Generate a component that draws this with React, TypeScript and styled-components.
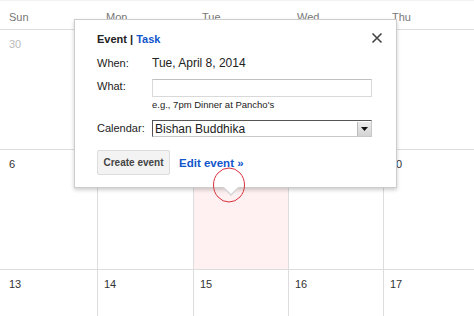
import React from 'react';
import styled, { createGlobalStyle } from 'styled-components';

const GlobalStyle = createGlobalStyle`
  html, body { margin: 0; padding: 0; background: #fff; }
  body { font-family: "Liberation Sans", Arial, sans-serif; }
`;

const Page = styled.div`
  position: relative;
  width: 474px;
  height: 316px;
  overflow: hidden;
  background: #fff;
`;

const Grid = styled.div`
  display: grid;
  grid-template-columns: 97px 96px 95px 95px 91px;
  grid-template-rows: 29px 120px 120px 120px;
  width: 474px;
  border-top: 1px solid #f2f2f2;
`;

const HeadCell = styled.div`
  border-bottom: 1px solid #dddddd;
  padding: 10px 0 0 9px;
  font-size: 11px;
  color: #777;
  box-sizing: border-box;
`;

const DayCell = styled.div<{ $today?: boolean; $first?: boolean }>`
  border-bottom: 1px solid #dddddd;
  border-left: ${p => (p.$first ? 'none' : '1px solid #dddddd')};
  background: ${p => (p.$today ? '#fff1f1' : '#fff')};
  box-sizing: border-box;
  padding: 4px 0 0 ${p => (p.$first ? '9px' : '6px')};
`;

const DayNum = styled.span<{ $muted?: boolean }>`
  font-size: 11px;
  color: ${p => (p.$muted ? '#bbbbbb' : '#333')};
`;

const Popup = styled.div`
  position: absolute;
  left: 74px;
  top: 19px;
  width: 323px;
  height: 169px;
  box-sizing: border-box;
  background: #fff;
  border: 1px solid #cccccc;
  box-shadow: 0 2px 4px rgba(0, 0, 0, 0.2);
  padding: 12px 0 0 22px;

  &::before {
    content: '';
    position: absolute;
    left: 147px;
    bottom: -9px;
    border-left: 9px solid transparent;
    border-right: 9px solid transparent;
    border-top: 9px solid #d4d4d4;
  }
  &::after {
    content: '';
    position: absolute;
    left: 148px;
    bottom: -7px;
    border-left: 8px solid transparent;
    border-right: 8px solid transparent;
    border-top: 8px solid #fff;
  }
`;

const Close = styled.button`
  position: absolute;
  right: 13px;
  top: 12px;
  width: 12px;
  height: 12px;
  padding: 0;
  border: none;
  background: none;
  display: flex;
`;

const Title = styled.div`
  font-size: 11px;
  font-weight: bold;
  color: #222;
  line-height: 14px;
`;

const TaskLink = styled.span`
  color: #1155cc;
`;

const Form = styled.div`
  display: grid;
  grid-template-columns: 55px 220px;
  margin-top: 10px;
  font-size: 11px;
  color: #222;
`;

const Label = styled.div<{ $top?: number }>`
  line-height: 14px;
  padding-top: ${p => p.$top ?? 0}px;
`;

const Value = styled.div`
  font-size: 12px;
  line-height: 14px;
`;

const Spacer = styled.div<{ $h: number }>`
  grid-column: 1 / -1;
  height: ${p => p.$h}px;
`;

const TextInput = styled.div`
  height: 18px;
  box-sizing: border-box;
  border: 1px solid #d9d9d9;
  border-top-color: #c0c0c0;
`;

const Hint = styled.div`
  font-size: 9.5px;
  line-height: 12px;
  margin-top: 2px;
  color: #222;
`;

const Select = styled.div`
  height: 17px;
  box-sizing: border-box;
  border: 1px solid #c8c8c8;
  border-top-color: #555;
  border-left-color: #555;
  display: flex;
  align-items: center;
  font-size: 12px;
  padding-left: 2px;
  justify-content: space-between;
`;

const SelectArrow = styled.div`
  width: 13px;
  height: 14px;
  background: linear-gradient(#ececec, #d4d4d4);
  border-left: 1px solid #bbb;
  display: flex;
  align-items: center;
  justify-content: center;
`;

const Actions = styled.div`
  display: flex;
  align-items: center;
  gap: 9px;
  margin-top: 13px;
`;

const Button = styled.button`
  height: 25px;
  width: 73px;
  padding: 0;
  border: 1px solid #dcdcdc;
  border-radius: 2px;
  background: #f3f3f3;
  font-family: "Liberation Sans", Arial, sans-serif;
  font-size: 10px;
  font-weight: bold;
  color: #444;
`;

const EditLink = styled.span`
  color: #1155cc;
  font-weight: bold;
  font-size: 11.5px;
`;

const Circle = styled.svg`
  position: absolute;
  left: 212px;
  top: 165px;
`;

const heads = ['Sun', 'Mon', 'Tue', 'Wed', 'Thu'];
const weeks = [
  ['30', '31', '1', '2', '3'],
  ['6', '7', '8', '9', '10'],
  ['13', '14', '15', '16', '17'],
];

export default function App() {
  return (
    <Page>
      <GlobalStyle />
      <Grid>
        {heads.map(h => (
          <HeadCell key={h}>{h}</HeadCell>
        ))}
        {weeks.map((w, wi) =>
          w.map((d, di) => (
            <DayCell key={wi + '-' + di} $first={di === 0} $today={wi === 1 && di === 2}>
              <DayNum $muted={wi === 0 && di < 2}>{d}</DayNum>
            </DayCell>
          ))
        )}
      </Grid>

      <Popup>
        <Close aria-label="Close">
          <svg width="12" height="12" viewBox="0 0 12 12">
            <path d="M1.5 1.5 L10.5 10.5 M10.5 1.5 L1.5 10.5" stroke="#444" strokeWidth="1.6" />
          </svg>
        </Close>
        <Title>
          Event | <TaskLink>Task</TaskLink>
        </Title>
        <Form>
          <Label>When:</Label>
          <Value>Tue, April 8, 2014</Value>
          <Spacer $h={9} />
          <Label>What:</Label>
          <div>
            <TextInput />
            <Hint>e.g., 7pm Dinner at Pancho's</Hint>
          </div>
          <Spacer $h={9} />
          <Label $top={1}>Calendar:</Label>
          <Select>
            Bishan Buddhika
            <SelectArrow>
              <svg width="7" height="4" viewBox="0 0 7 4">
                <path d="M0 0 H7 L3.5 4 Z" fill="#111" />
              </svg>
            </SelectArrow>
          </Select>
        </Form>
        <Actions>
          <Button>Create event</Button>
          <EditLink>Edit event »</EditLink>
        </Actions>
      </Popup>

      <Circle width="36" height="40" viewBox="0 0 36 40">
        <ellipse cx="17" cy="20" rx="15.5" ry="17" fill="none" stroke="#d8303c" strokeWidth="1" />
      </Circle>
    </Page>
  );
}
